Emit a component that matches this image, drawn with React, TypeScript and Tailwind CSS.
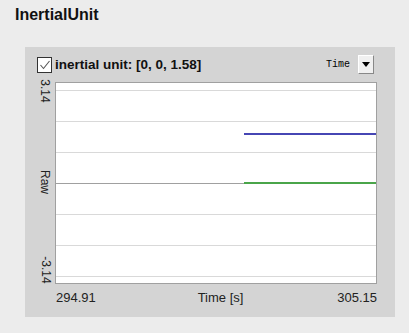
import React from 'react';

const gridYs = [7, 38, 69, 131, 162, 193];

const App = () => {
  return (
    <div className="w-[409px] h-[333px] bg-[#ececec] font-['Liberation_Sans',Arial,sans-serif] text-[#111] overflow-hidden">
      {/* Title */}
      <div className="pl-[15px] pt-[6px] h-[47px] text-[16px] font-bold leading-[18px]">InertialUnit</div>

      {/* Panel */}
      <div className="ml-[25px] w-[370px] h-[270px] bg-[#d4d4d4] flex flex-col">
        {/* Header */}
        <div className="h-[35px] flex items-center pl-[12px] pr-[21px]">
          <div className="w-[15px] h-[16px] bg-white border border-[#333] flex items-center justify-center">
            <svg width="12" height="12" viewBox="0 0 12 12">
              <path d="M1.5 6 L4.5 9.5 L10.5 2" fill="none" stroke="#555" strokeWidth="1.1" />
            </svg>
          </div>
          <span className="ml-[3px] text-[13.5px] font-bold leading-none">inertial unit: [0, 0, 1.58]</span>
          <span className="ml-auto font-['Liberation_Mono',monospace] text-[10px] leading-none text-black">Time</span>
          <div className="ml-[8px] w-[16px] h-[19px] bg-[#f0f0f0] border border-t-white border-l-white border-r-[#888] border-b-[#888] flex items-center justify-center">
            <svg width="8" height="5" viewBox="0 0 8 5">
              <path d="M0 0 L8 0 L4 5 Z" fill="#000" />
            </svg>
          </div>
        </div>

        {/* Plot row */}
        <div className="flex">
          <div className="w-[30px] h-[202px] relative text-[12px] leading-[12px] text-[#222]">
            <span className="absolute left-[8px] top-[3px] rotate-90 origin-center whitespace-nowrap">3.14</span>
            <span className="absolute left-[8px] top-[94px] rotate-90 origin-center whitespace-nowrap">Raw</span>
            <span className="absolute left-[7px] top-[182px] rotate-90 origin-center whitespace-nowrap">-3.14</span>
          </div>
          <div className="w-[322px] h-[202px] bg-white border border-[#a0a0a0]">
            <svg width="320" height="200" viewBox="0 0 320 200" className="block">
              {gridYs.map((y) => (
                <line key={y} x1="0" x2="320" y1={y + 0.5} y2={y + 0.5} stroke="#d9d9d9" strokeWidth="1" />
              ))}
              <line x1="0" x2="188" y1="100.5" y2="100.5" stroke="#a0a0a0" strokeWidth="1" />
              <line x1="188" x2="320" y1="51" y2="51" stroke="#4646b4" strokeWidth="2" />
              <line x1="188" x2="320" y1="100" y2="100" stroke="#4aa54a" strokeWidth="2" />
            </svg>
          </div>
        </div>

        {/* X axis labels */}
        <div className="ml-[30px] w-[322px] flex justify-between items-start pt-[7px] text-[13px] leading-none text-[#222]">
          <span className="pl-[1px]">294.91</span>
          <span className="pl-[8px]">Time [s]</span>
          <span>305.15</span>
        </div>
      </div>
    </div>
  );
};

export default App;
